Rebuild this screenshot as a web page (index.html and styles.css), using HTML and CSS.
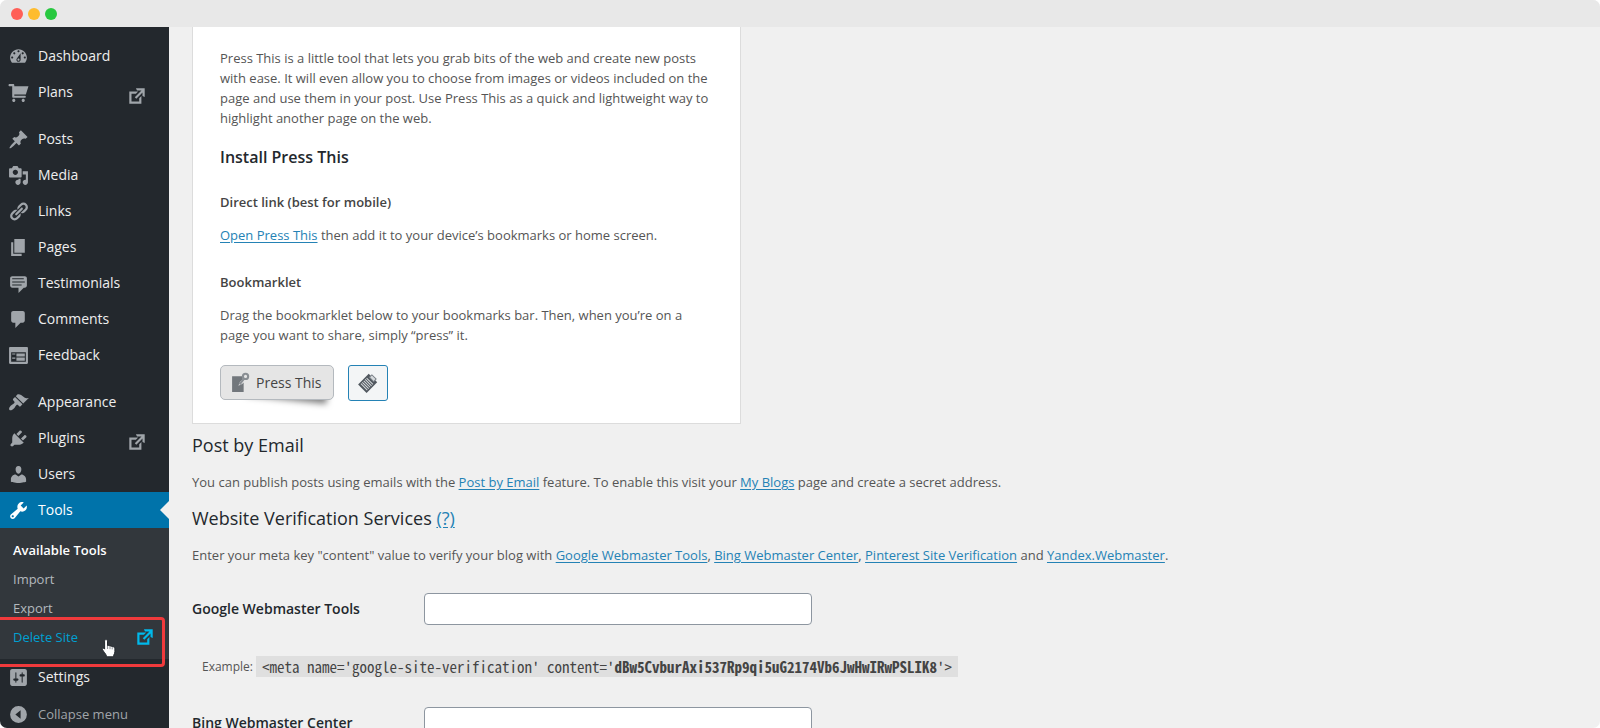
FILE: index.html
```html
<!DOCTYPE html>
<html lang="en">
<head>
<meta charset="utf-8">
<title>Tools</title>
<link rel="stylesheet" href="styles.css">
</head>
<body>
<svg class="sprite" aria-hidden="true">
  <symbol id="ext" viewBox="0 0 20 20"><path d="M9 3h8v8l-2-1V6.92l-5.6 5.59-1.41-1.41L14.08 5H10zm3 12v-3l2-2v7H3V6h8L9 8H5v7h7z"/></symbol>
</svg>
<div class="window">
  <header class="titlebar">
    <span class="dot dot-close"></span><span class="dot dot-min"></span><span class="dot dot-max"></span>
  </header>
  <div class="body">
    <nav class="sidebar">
      <ul class="menu">
        <li><a class="item" href="#"><svg class="icon" viewBox="0 0 20 20"><path d="M3.76 16h12.48c1.1-1.37 1.76-3.11 1.76-5 0-4.42-3.58-8-8-8s-8 3.58-8 8c0 1.89.66 3.63 1.76 5zM10 4c.55 0 1 .45 1 1s-.45 1-1 1-1-.45-1-1 .45-1 1-1zM6 6c.55 0 1 .45 1 1s-.45 1-1 1-1-.45-1-1 .45-1 1-1zm8 0c.55 0 1 .45 1 1s-.45 1-1 1-1-.45-1-1 .45-1 1-1zm-5.37 5.55L12 7v6c0 1.1-.9 2-2 2s-2-.9-2-2c0-.57.24-1.08.63-1.45zM4 10c.55 0 1 .45 1 1s-.45 1-1 1-1-.45-1-1 .45-1 1-1zm12 0c.55 0 1 .45 1 1s-.45 1-1 1-1-.45-1-1 .45-1 1-1zm-5 3c0-.55-.45-1-1-1s-1 .45-1 1 .45 1 1 1 1-.45 1-1z"/></svg>Dashboard</a></li>
        <li><a class="item" href="#"><svg class="icon" viewBox="0 0 20 20"><path d="M6 13h10c.55 0 1 .45 1 1s-.45 1-1 1H5c-.55 0-1-.45-1-1V4H1.500c-.55 0-1-.45-1-1s.45-1 1-1H5c.55 0 1 .45 1 1v1h13.500l-2.500 8H6v1zm-.5 3c.83 0 1.5.67 1.5 1.5S6.33 19 5.5 19 4 18.33 4 17.5 4.67 16 5.5 16zm9 0c.83 0 1.5.67 1.5 1.5s-.67 1.5-1.5 1.5-1.5-.67-1.5-1.5.67-1.5 1.5-1.5z"/></svg>Plans<svg class="ext"><use href="#ext"/></svg></a></li>
        <li class="gap"><a class="item" href="#"><svg class="icon" viewBox="0 0 20 20"><path d="M10.44 3.02l1.82-1.82 6.36 6.35-1.83 1.82c-1.05-.68-2.48-.57-3.41.36l-.75.75c-.92.93-1.04 2.35-.35 3.41l-1.83 1.82-2.41-2.41-2.8 2.79c-.42.42-3.38 2.71-3.8 2.29s1.86-3.39 2.28-3.81l2.79-2.79L4.1 9.36l1.83-1.82c1.05.69 2.48.57 3.4-.36l.75-.75c.93-.92 1.05-2.35.36-3.41z"/></svg>Posts</a></li>
        <li><a class="item" href="#"><svg class="icon" viewBox="0 0 20 20"><path d="M13 11V4c0-.55-.45-1-1-1h-1.67L9 1H5L3.67 3H2c-.55 0-1 .45-1 1v7c0 .55.45 1 1 1h10c.55 0 1-.45 1-1zM7 4.5c1.38 0 2.5 1.12 2.5 2.5S8.38 9.5 7 9.5 4.5 8.38 4.5 7 5.62 4.5 7 4.5zM14 6h5v10.5c0 1.38-1.12 2.5-2.5 2.5S14 17.88 14 16.5s1.12-2.5 2.5-2.5c.17 0 .34.02.5.05V9h-3V6zm-4 8.05V13h2v3.5c0 1.38-1.12 2.5-2.5 2.5S7 17.88 7 16.5 8.12 14 9.5 14c.17 0 .34.02.5.05z"/></svg>Media</a></li>
        <li><a class="item" href="#"><svg class="icon" viewBox="0 0 20 20"><path d="M17.74 2.76c1.68 1.69 1.68 4.41 0 6.1l-1.53 1.52c-1.12 1.12-2.7 1.47-4.14 1.09l2.62-2.61.76-.77.76-.76c.84-.84.84-2.2 0-3.04-.84-.85-2.2-.85-3.04 0l-.77.76-3.38 3.38c-.37-1.44-.02-3.02 1.1-4.14l1.52-1.53c1.69-1.68 4.42-1.68 6.1 0zM8.59 13.43l5.34-5.34c.42-.42.42-1.1 0-1.52-.44-.43-1.13-.39-1.53 0l-5.33 5.34c-.42.42-.42 1.1 0 1.52.44.43 1.13.39 1.52 0zm-.76 2.29l4.14-4.15c.38 1.44.03 3.02-1.09 4.14l-1.52 1.53c-1.69 1.68-4.41 1.68-6.1 0-1.68-1.68-1.68-4.42 0-6.1l1.53-1.52c1.12-1.12 2.7-1.47 4.14-1.1l-4.14 4.15c-.85.84-.85 2.2 0 3.05.84.84 2.2.84 3.04 0z"/></svg>Links</a></li>
        <li><a class="item" href="#"><svg class="icon" viewBox="0 0 20 20"><path d="M6 15V2h10v13H6zm-1 1h8v2H3V5h2v11z"/></svg>Pages</a></li>
        <li><a class="item" href="#"><svg class="icon" viewBox="0 0 20 20"><path fill-rule="evenodd" d="M4 3h12c.55 0 1.02.2 1.41.59S18 4.45 18 5v7c0 .55-.2 1.02-.59 1.41S16.55 14 16 14h-1l-5 5v-5H4c-.55 0-1.02-.2-1.41-.59S2 12.55 2 12V5c0-.55.2-1.02.59-1.41S3.45 3 4 3zm11 2H4v1h11V5zm1 3H4v1h12V8zm-3 3H4v1h9v-1z"/></svg>Testimonials</a></li>
        <li><a class="item" href="#"><svg class="icon" viewBox="0 0 20 20"><path d="M5 2h9c1.1 0 2 .9 2 2v7c0 1.1-.9 2-2 2h-2l-5 5v-5H5c-1.1 0-2-.9-2-2V4c0-1.1.9-2 2-2z"/></svg>Comments</a></li>
        <li><a class="item" href="#"><svg class="icon" viewBox="0 0 20 20"><path fill-rule="evenodd" d="M2 2h16c.55 0 1 .45 1 1v14c0 .55-.45 1-1 1H2c-.55 0-1-.45-1-1V3c0-.55.45-1 1-1zm15 14V7H3v9h14zM4 8v1h3V8H4zm4 0v3h8V8H8zm-4 4v1h3v-1H4zm4 0v3h8v-3H8z"/></svg>Feedback</a></li>
        <li class="gap"><a class="item" href="#"><svg class="icon" viewBox="0 0 20 20"><path d="M14.48 11.06L7.41 3.99l1.5-1.5c.5-.56 2.3-.47 3.51.32 1.21.8 1.43 1.28 2.91 2.1 1.18.64 2.45 1.26 4.45.85zm-.71.71L6.7 4.7 4.93 6.47c-.39.39-.39 1.02 0 1.41l1.06 1.06c.39.39.39 1.03 0 1.42-.6.6-1.43 1.11-2.21 1.69-.35.26-.7.53-1.01.84C1.43 14.23.4 16.08 1.4 17.07c.99 1 2.84-.03 4.18-1.36.31-.31.58-.66.85-1.02.57-.78 1.08-1.61 1.69-2.21.39-.39 1.02-.39 1.41 0l1.06 1.06c.39.39 1.02.39 1.41 0z"/></svg>Appearance</a></li>
        <li><a class="item" href="#"><svg class="icon" viewBox="0 0 20 20"><path d="M13.11 4.36L9.87 7.6 8 5.73l3.24-3.24c.35-.34 1.05-.2 1.56.32.52.51.66 1.21.31 1.55zm-8 1.77l.91-1.12 9.01 9.01-1.19.84c-.71.71-2.63 1.16-3.82 1.16H6.14L4.9 17.26c-.59.59-1.54.59-2.12 0-.59-.58-.59-1.53 0-2.12l1.24-1.24v-3.88c0-1.13.4-3.19 1.09-3.89zm7.26 3.97l3.24-3.24c.34-.35 1.04-.21 1.55.31.52.51.66 1.21.31 1.55l-3.24 3.25z"/></svg>Plugins<svg class="ext"><use href="#ext"/></svg></a></li>
        <li><a class="item" href="#"><svg class="icon" viewBox="0 0 20 20"><path d="M10 9.25c-2.27 0-2.73-3.44-2.73-3.44C7 4.02 7.82 2 9.97 2c2.16 0 2.98 2.02 2.71 3.81 0 0-.41 3.44-2.68 3.44zm0 2.57L12.72 10c2.39 0 4.52 2.33 4.52 4.53v2.49s-3.65 1.13-7.24 1.13c-3.65 0-7.24-1.13-7.24-1.13v-2.49c0-2.25 1.94-4.48 4.47-4.48z"/></svg>Users</a></li>
        <li>
          <a class="item item-current" href="#"><svg class="icon" viewBox="0 0 20 20"><path d="M16.68 9.77c-1.34 1.34-3.3 1.67-4.95.99l-5.41 6.52c-.99.99-2.59.99-3.58 0s-.99-2.59 0-3.57l6.52-5.42c-.68-1.65-.35-3.61.99-4.95 1.28-1.28 3.12-1.62 4.72-1.06l-2.89 2.89 2.82 2.82 2.86-2.87c.53 1.58.18 3.39-1.08 4.65zM3.81 16.21c.4.39 1.04.39 1.43 0 .4-.4.4-1.04 0-1.43-.39-.4-1.03-.4-1.43 0-.39.39-.39 1.03 0 1.43z"/></svg>Tools</a>
          <ul class="submenu">
            <li><a class="sub sub-current" href="#">Available Tools</a></li>
            <li><a class="sub" href="#">Import</a></li>
            <li><a class="sub" href="#">Export</a></li>
            <li class="marked"><a class="sub sub-hover" href="#">Delete Site<svg class="sub-ext"><use href="#ext"/></svg></a>
              <span class="marker"></span>
              <svg class="pointer" viewBox="0 0 16 20"><path d="M5 1.600c.9 0 1.500.6 1.500 1.500v4.600l.5-.1c.8-.3 1.600 0 1.900.6.8-.4 1.700-.1 2.100.6 1-.3 2.900 0 2.900 2v3c0 1.600-.9 2.300-1.300 3.800v1.200H5.400v-1.200C4.700 15.900 2.500 13.500 1.500 11.700c-.5-1 .7-2 1.700-1.100l.4.5V3.100c0-.9.5-1.500 1.400-1.500z"/><path class="pointer-lines" d="M6.600 8v3M9 8.600v2.600M11.200 9.400v2"/></svg>
            </li>
          </ul>
        </li>
        <li><a class="item" href="#"><svg class="icon" viewBox="0 0 20 20"><path d="M18 16V4c0-1.1-.9-2-2-2H4c-1.1 0-2 .9-2 2v12c0 1.1.9 2 2 2h12c1.1 0 2-.9 2-2zM8 11h1c.55 0 1 .45 1 1s-.45 1-1 1H8v1.5c0 .28-.22.5-.5.5s-.5-.22-.5-.5V13H6c-.55 0-1-.45-1-1s.45-1 1-1h1V5.500c0-.28.22-.5.5-.5s.5.22.5.5V11zm5-2h-1c-.55 0-1-.45-1-1s.45-1 1-1h1V5.500c0-.28.22-.5.5-.5s.5.22.5.5V7h1c.55 0 1 .45 1 1s-.45 1-1 1h-1v5.500c0 .28-.22.5-.5.5s-.5-.22-.5-.5V9z"/></svg>Settings</a></li>
        <li><button class="item item-collapse" type="button"><svg class="icon" viewBox="0 0 20 20"><path fill-rule="evenodd" d="M10 2a8 8 0 1 0 0 16 8 8 0 0 0 0-16zm2 12V6l-5 4z"/></svg>Collapse menu</button></li>
      </ul>
    </nav>
    <main class="content">
      <section class="card">
        <p>Press This is a little tool that lets you grab bits of the web and create new posts<br>with ease. It will even allow you to choose from images or videos included on the<br>page and use them in your post. Use Press This as a quick and lightweight way to<br>highlight another page on the web.</p>
        <h3>Install Press This</h3>
        <h4>Direct link (best for mobile)</h4>
        <p><a href="#">Open Press This</a> then add it to your device’s bookmarks or home screen.</p>
        <h4 class="second">Bookmarklet</h4>
        <p>Drag the bookmarklet below to your bookmarks bar. Then, when you’re on a<br>page you want to share, simply “press” it.</p>
        <div class="actions">
          <a class="press" href="#"><span class="press-face"><svg class="press-icon" viewBox="0 0 20 20"><path d="M2 4h9.500c0 1 .4 2 .9 2.600L9.500 9.500 8 13l3.500-1.500L13 10v9H2z"/><path class="ring" d="M9.200 11.800l3.800-5"/><circle class="ring" cx="14.800" cy="4.200" r="2.500"/></svg>Press This</span></a>
          <button class="copy" type="button" aria-label="Copy bookmarklet code"><svg class="copy-icon" viewBox="0 0 20 20"><g transform="rotate(45 10 10)"><path d="M4 3h12v15H4z"/><path class="copy-lines" d="M5.500 7.500h9M5.500 9.500h9M5.500 11.500h9M5.500 13.500h9M5.500 15.500h9"/><path class="copy-tab" d="M7 1.500h6v3.500H7z"/></g></svg></button>
        </div>
      </section>
      <h2>Post by Email</h2>
      <p>You can publish posts using emails with the <a href="#">Post by Email</a> feature. To enable this visit your <a href="#">My Blogs</a> page and create a secret address.</p>
      <h2>Website Verification Services <a href="#">(?)</a></h2>
      <p>Enter your meta key "content" value to verify your blog with <a href="#">Google Webmaster Tools</a>, <a href="#">Bing Webmaster Center</a>, <a href="#">Pinterest Site Verification</a> and <a href="#">Yandex.Webmaster</a>.</p>
      <form class="form">
        <div class="field"><label for="google">Google Webmaster Tools</label><input id="google" type="text"></div>
        <div class="example"><span>Example:</span><code>&lt;meta name='google-site-verification' content='<b>dBw5CvburAxi537Rp9qi5uG2174Vb6JwHwIRwPSLIK8</b>'&gt;</code></div>
        <div class="field"><label for="bing">Bing Webmaster Center</label><input id="bing" type="text"></div>
      </form>
    </main>
  </div>
</div>
</body>
</html>
```
FILE: styles.css
```css
* { box-sizing: border-box; }
html { background: #fff; }
body {
  margin: 0;
  font-family: "Open Sans", "Noto Sans", sans-serif;
  font-size: 13px;
  line-height: 20px;
  color: #555;
}
ul, p, h2, h3, h4 { margin: 0; padding: 0; }
ul { list-style: none; }
a { color: #2482b5; text-underline-offset: 2px; }
.sprite { position: absolute; width: 0; height: 0; }

.window {
  height: 100vh;
  display: flex;
  flex-direction: column;
  overflow: hidden;
  border-radius: 7px;
  background: #f0f0f0;
}
.titlebar {
  flex: none;
  height: 27px;
  padding: 1px 11px 0;
  display: flex;
  align-items: center;
  gap: 5px;
  background: #e8e8e8;
}
.dot { width: 12px; height: 12px; border-radius: 50%; }
.dot-close { background: #ff5f57; }
.dot-min { background: #febc2e; }
.dot-max { background: #28c840; }
.body { flex: 1; min-height: 0; display: flex; }

.sidebar { flex: none; width: 169px; background: #23282d; }
.menu { padding-top: 11px; }
.gap { margin-top: 11px; }
.item {
  position: relative;
  display: flex;
  align-items: center;
  gap: 9px;
  width: 100%;
  height: 36px;
  padding: 0 0 0 8px;
  border: 0;
  background: none;
  font: 14px/20px "Open Sans", "Noto Sans", sans-serif;
  color: #eee;
  text-decoration: none;
}
.icon { flex: none; width: 21px; height: 21px; fill: #a0a5aa; }
.ext { width: 22px; height: 22px; margin: 7px 21px 0 auto; fill: #a0a5aa; }
.item-current { background: #0073aa; color: #fff; }
.item-current .icon { fill: #fff; }
.item-current::after {
  content: "";
  position: absolute;
  right: 0;
  top: 9px;
  border: 9px solid transparent;
  border-left-width: 0;
  border-right-color: #f0f0f0;
}
.item-collapse { height: 38px; font-size: 13px; color: #a0a5aa; }

.submenu { padding: 7px 0 8px; background: #32373c; }
.sub {
  display: flex;
  align-items: center;
  height: 29px;
  padding-left: 13px;
  color: #b4b9be;
  text-decoration: none;
}
.sub-current { color: #fff; font-weight: 600; }
.sub-hover { color: #00a0d2; }
.sub-ext { width: 22px; height: 22px; margin: 0 13px 0 auto; fill: #00b9eb; }
.marked { position: relative; }
.marker {
  position: absolute;
  z-index: 1;
  top: -5px;
  left: -4px;
  right: 4px;
  height: 50px;
  border: 3px solid #f03a3c;
  border-radius: 4px;
  pointer-events: none;
}
.pointer {
  position: absolute;
  z-index: 2;
  left: 101px;
  top: 16px;
  width: 16px;
  height: 20px;
  fill: #fff;
  stroke: #23282d;
  stroke-width: 1;
}
.pointer-lines { fill: none; stroke: #8a8f94; }

.content { flex: 1; min-width: 0; overflow: hidden; padding-left: 23px; }
.card {
  max-width: 549px;
  padding: 21px 27px 22px;
  border: 1px solid #dcdcdc;
  border-top: 0;
  background: #fff;
}
h2, h3 { color: #23282d; }
h2 { font-size: 18px; line-height: 24px; font-weight: 400; }
h3 { font-size: 16px; line-height: 24px; font-weight: 600; margin-top: 17px; }
h4 { font-size: 13px; line-height: 20px; font-weight: 600; color: #444; margin: 23px 0 13px; }
h4.second { margin-top: 27px; }
.actions { display: flex; gap: 14px; margin-top: 20px; }
.press { position: relative; color: #444; font-size: 14px; text-decoration: none; }
.press::after {
  content: "";
  position: absolute;
  right: 6px;
  bottom: 9px;
  width: 80px;
  height: 12px;
  transform: rotate(6deg);
  box-shadow: 0 8px 6px rgba(0, 0, 0, 0.5);
}
.press-face {
  position: relative;
  z-index: 1;
  display: flex;
  align-items: center;
  gap: 5px;
  height: 35px;
  padding: 0 11px 0 9px;
  border: 1px solid #b4b9be;
  border-radius: 5px;
  background: #e5e5e5;
}
.press-icon { width: 21px; height: 21px; fill: #72777c; }
.ring { fill: none; stroke: #8a8f94; stroke-width: 2; }
.copy {
  display: grid;
  place-items: center;
  width: 40px;
  height: 36px;
  padding: 0;
  border: 1px solid #2482b5;
  border-radius: 3px;
  background: #f3f5f6;
}
.copy-icon { width: 20px; height: 20px; fill: #50575e; }
.copy-tab { fill: #d5d9dc; stroke: #787f86; }
.copy-lines { stroke: #d5d9dc; stroke-width: 1; }

.content > h2 { margin-top: 9px; }
.content > p { margin-top: 15px; }
.content > p + h2 { margin-top: 14px; }
.form { margin-top: 28px; }
.field { display: flex; align-items: center; }
.field label { flex: none; width: 232px; font-size: 14px; font-weight: 600; color: #23282d; }
.field input {
  width: 388px;
  height: 32px;
  padding: 0 8px;
  border: 1px solid #8d96a0;
  border-radius: 4px;
  background: #fff;
}
.example {
  display: flex;
  align-items: center;
  gap: 3px;
  margin: 31px 0 30px 10px;
  font-size: 12px;
}
code {
  padding: 0 6px;
  background: #dfdfdf;
  font: 15px/21px "Noto Sans Mono CJK SC", "DejaVu Sans Mono", monospace;
  color: #444;
  white-space: nowrap;
}
```
